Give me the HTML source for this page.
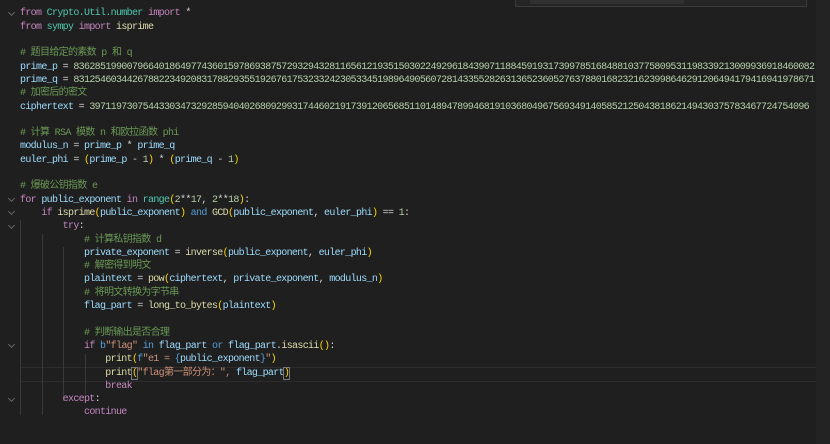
<!DOCTYPE html>
<html><head><meta charset="utf-8"><style>
html,body{margin:0;padding:0;background:#1f1f1f;width:830px;height:444px;overflow:hidden}
#ed{position:absolute;left:0;top:0;width:816px;height:444px;overflow:hidden}
.l{position:absolute;left:20px;height:13.3px;line-height:13.3px;white-space:pre;font-family:"Liberation Mono","Noto Sans CJK SC",monospace;font-size:10px;letter-spacing:-0.67px;color:#d4d4d4}
.k{color:#c586c0}.b{color:#569cd6}.v{color:#9cdcfe}.f{color:#dcdcaa}.n{color:#b5cea8}.c{color:#6a9955}.s{color:#ce9178}.t{color:#4ec9b0}.y{color:#ffd700}.p{color:#da70d6}
.g{position:absolute;width:1px;background:#3a3a3a}
.fold{position:absolute;left:9px;width:4px;height:4px;border-right:1px solid #666;border-bottom:1px solid #666;transform:rotate(45deg)}
</style></head><body>
<div style="position:absolute;left:515px;top:0;width:292px;height:7px;background:#252526;border:1px solid #3a3a3a;border-top:none;box-sizing:border-box"><div style="position:absolute;left:14px;top:0;width:154px;height:4px;background:#313131"></div></div>
<div style="position:absolute;left:816px;top:0;width:14px;height:444px;background:#232323"></div>
<div style="position:absolute;left:20px;top:367px;width:796px;height:13px;border-top:1px solid #2c2c2c;border-bottom:1px solid #2c2c2c"></div>
<div class="g" style="left:20px;top:220px;height:195px"></div>
<div class="g" style="left:42px;top:234px;height:181px"></div>
<div class="g" style="left:63px;top:247px;height:154px"></div>
<div class="g" style="left:85px;top:354px;height:40px"></div>
<div class="fold" style="top:10px"></div>
<div class="fold" style="top:196px"></div>
<div class="fold" style="top:209px"></div>
<div class="fold" style="top:223px"></div>
<div class="fold" style="top:342px"></div>
<div class="fold" style="top:396px"></div>
<div id="ed">
<div class="l" style="top:7.4px"><span class="k">from</span> <span class="t">Crypto.Util.number</span> <span class="k">import</span> *</div>
<div class="l" style="top:20.7px"><span class="k">from</span> <span class="t">sympy</span> <span class="k">import</span> <span class="f">isprime</span></div>
<div class="l" style="top:47.3px"><span class="c"># 题目给定的素数 p 和 q</span></div>
<div class="l" style="top:60.6px"><span class="v">prime_p</span> = <span class="n">8362851990079664018649774360159786938757293294328116561219351503022492961843907118845919317399785168488103775809531198339213009936918460082</span></div>
<div class="l" style="top:73.9px"><span class="v">prime_q</span> = <span class="n">8312546034426788223492083178829355192676175323324230533451989649056072814335528263136523605276378801682321623998646291206494179416941978671</span></div>
<div class="l" style="top:87.2px"><span class="c"># 加密后的密文</span></div>
<div class="l" style="top:100.5px"><span class="v">ciphertext</span> = <span class="n">397119730754433034732928594040268092993174460219173912065685110148947899468191036804967569349140585212504381862149430375783467724754096</span></div>
<div class="l" style="top:127.1px"><span class="c"># 计算 RSA 模数 n 和欧拉函数 phi</span></div>
<div class="l" style="top:140.4px"><span class="v">modulus_n</span> = <span class="v">prime_p</span> * <span class="v">prime_q</span></div>
<div class="l" style="top:153.7px"><span class="v">euler_phi</span> = <span class="y">(</span><span class="v">prime_p</span> - <span class="n">1</span><span class="y">)</span> * <span class="y">(</span><span class="v">prime_q</span> - <span class="n">1</span><span class="y">)</span></div>
<div class="l" style="top:180.3px"><span class="c"># 爆破公钥指数 e</span></div>
<div class="l" style="top:193.6px"><span class="k">for</span> <span class="v">public_exponent</span> <span class="k">in</span> <span class="t">range</span><span class="y">(</span><span class="n">2</span>**<span class="n">17</span>, <span class="n">2</span>**<span class="n">18</span><span class="y">)</span>:</div>
<div class="l" style="top:206.9px">    <span class="k">if</span> <span class="f">isprime</span><span class="y">(</span><span class="v">public_exponent</span><span class="y">)</span> <span class="b">and</span> <span class="f">GCD</span><span class="y">(</span><span class="v">public_exponent</span>, <span class="v">euler_phi</span><span class="y">)</span> == <span class="n">1</span>:</div>
<div class="l" style="top:220.2px">        <span class="k">try</span>:</div>
<div class="l" style="top:233.5px">            <span class="c"># 计算私钥指数 d</span></div>
<div class="l" style="top:246.8px">            <span class="v">private_exponent</span> = <span class="f">inverse</span><span class="y">(</span><span class="v">public_exponent</span>, <span class="v">euler_phi</span><span class="y">)</span></div>
<div class="l" style="top:260.1px">            <span class="c"># 解密得到明文</span></div>
<div class="l" style="top:273.4px">            <span class="v">plaintext</span> = <span class="f">pow</span><span class="y">(</span><span class="v">ciphertext</span>, <span class="v">private_exponent</span>, <span class="v">modulus_n</span><span class="y">)</span></div>
<div class="l" style="top:286.7px">            <span class="c"># 将明文转换为字节串</span></div>
<div class="l" style="top:300px">            <span class="v">flag_part</span> = <span class="f">long_to_bytes</span><span class="y">(</span><span class="v">plaintext</span><span class="y">)</span></div>
<div class="l" style="top:326.6px">            <span class="c"># 判断输出是否合理</span></div>
<div class="l" style="top:339.9px">            <span class="k">if</span> <span class="b">b</span><span class="s">"flag"</span> <span class="b">in</span> <span class="v">flag_part</span> <span class="b">or</span> <span class="v">flag_part</span>.<span class="f">isascii</span><span class="y">()</span>:</div>
<div class="l" style="top:353.2px">                <span class="f">print</span><span class="y">(</span><span class="b">f</span><span class="s">"e1 = </span><span class="b">{</span><span class="v">public_exponent</span><span class="b">}</span><span class="s">"</span><span class="y">)</span></div>
<div class="l" style="top:366.5px">                <span class="f">print</span><span class="y" style="outline:1px solid #777">(</span><span class="s">"flag第一部分为：", </span><span class="v">flag_part</span><span class="y" style="outline:1px solid #777">)</span></div>
<div class="l" style="top:379.8px">                <span class="k">break</span></div>
<div class="l" style="top:393.1px">        <span class="k">except</span>:</div>
<div class="l" style="top:406.4px">            <span class="k">continue</span></div>
</div>
</body></html>
